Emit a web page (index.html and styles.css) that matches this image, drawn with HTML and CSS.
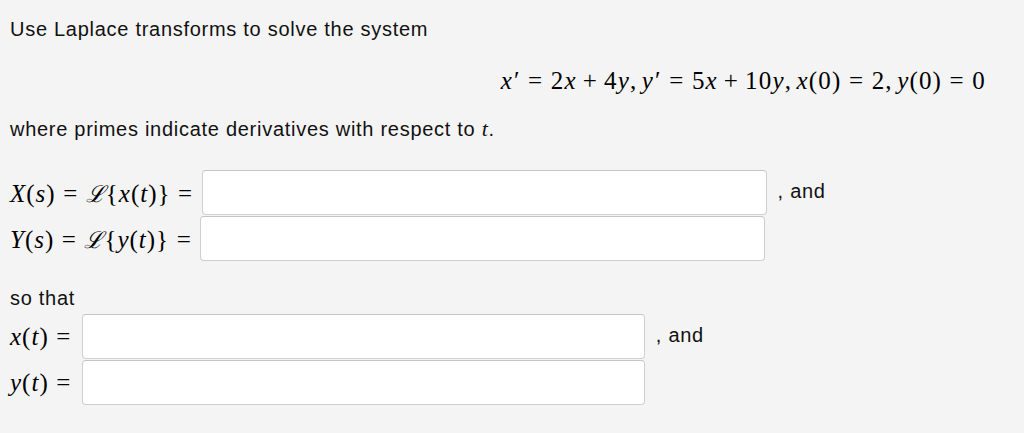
FILE: index.html
```html
<!DOCTYPE html>
<html>
<head>
<meta charset="utf-8">
<link rel="stylesheet" href="styles.css">
</head>
<body>
<div class="page">
  <p class="intro">Use Laplace transforms to solve the system</p>
  <div class="display">
    <span class="math eq"><i>x</i><span class="pr">′</span><span class="rel">=</span>2<i>x</i><span class="bin">+</span>4<i>y</i><span class="cm">,</span><i>y</i><span class="pr">′</span><span class="rel">=</span>5<i>x</i><span class="bin">+</span>10<i>y</i><span class="cm">,</span><i>x</i>(0)<span class="rel">=</span>2<span class="cm">,</span><i>y</i>(0)<span class="rel">=</span>0</span>
  </div>
  <p class="note">where primes indicate derivatives with respect to <i class="var">t</i>.</p>

  <div class="group first">
    <div class="row">
      <span class="math label"><i>X</i>(<i>s</i>)<span class="rel">=</span><span class="cal">ℒ</span>{<i>x</i>(<i>t</i>)}<span class="rel">=</span></span>
      <span class="field wide1"></span>
      <span class="after">, and</span>
    </div>
    <div class="row">
      <span class="math label"><i>Y</i>(<i>s</i>)<span class="rel">=</span><span class="cal">ℒ</span>{<i>y</i>(<i>t</i>)}<span class="rel">=</span></span>
      <span class="field wide1"></span>
    </div>
  </div>

  <p class="sothat">so that</p>

  <div class="group second">
    <div class="row">
      <span class="math label"><i>x</i>(<i>t</i>)<span class="rel">=</span></span>
      <span class="field wide2"></span>
      <span class="after">, and</span>
    </div>
    <div class="row">
      <span class="math label"><i>y</i>(<i>t</i>)<span class="rel">=</span></span>
      <span class="field wide2"></span>
    </div>
  </div>
</div>
</body>
</html>
```
FILE: styles.css
```css
html, body {
  margin: 0;
  padding: 0;
  background: #f4f4f4;
}
.page {
  padding: 0 0 0 10px;
  font-family: "Liberation Sans", Arial, sans-serif;
  font-size: 20px;
  letter-spacing: 0.72px;
  color: #111;
}
.intro {
  margin: 0;
  padding-top: 18px;
  line-height: 22px;
}
.display {
  display: flex;
  justify-content: flex-end;
  padding-right: 38px;
  margin-top: 24px;
  height: 34px;
  align-items: center;
}
.math {
  font-family: "Liberation Serif", "Times New Roman", serif;
  font-size: 25px;
  letter-spacing: 1px;
  color: #000;
  white-space: nowrap;
}
.math.eq {
  letter-spacing: 1.15px;
}
.math i, .var {
  font-style: italic;
}
.pr {
  margin-left: 1px;
}
.rel {
  margin: 0 0.3em;
}
.bin {
  margin: 0 0.24em;
}
.cm {
  margin-right: 0.18em;
}
.var {
  font-family: "Liberation Serif", serif;
  font-size: 22px;
}
.cal {
  font-family: "DejaVu Serif", serif;
  font-style: italic;
  font-size: 23px;
}
.note {
  margin: 0;
  margin-top: 20px;
  line-height: 22px;
}
.group {
  display: flex;
  flex-direction: column;
  gap: 1px;
}
.group.first {
  margin-top: 30px;
}
.group.second {
  margin-top: 5px;
}
.row {
  display: flex;
  align-items: center;
  height: 45px;
}
.group.first .label {
  margin-right: 1px;
}
.group.second .label {
  margin-right: 3px;
}
.field {
  display: block;
  height: 43px;
  background: #fff;
  border: 1px solid #cfcfcf;
  border-top-color: #c4c4c4;
  border-radius: 4px;
  box-sizing: content-box;
}
.wide1 { width: 563px; }
.wide2 { width: 561px; }
.after {
  margin-left: 11px;
  margin-top: -3px;
}
.sothat {
  margin: 0;
  margin-top: 26px;
  line-height: 22px;
}
```
